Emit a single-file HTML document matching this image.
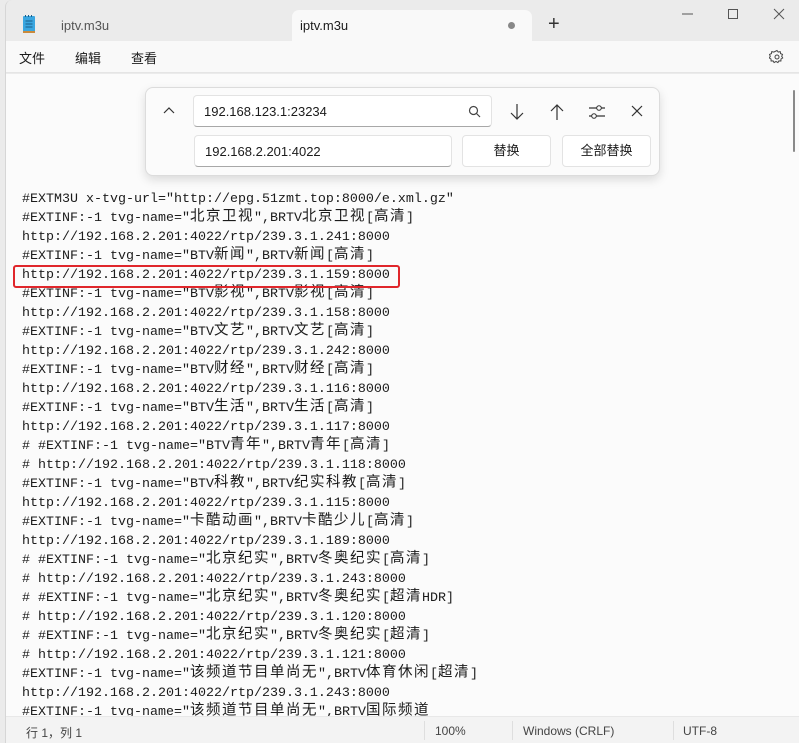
<!DOCTYPE html>
<html><head><meta charset="utf-8"><style>
*{margin:0;padding:0;box-sizing:border-box}
body{width:799px;height:743px;overflow:hidden;background:#ebebeb;font-family:"Liberation Sans","Noto Sans CJK SC",sans-serif;position:relative}
.abs{position:absolute}
#win{left:5px;top:0;width:794px;height:743px;background:#ebebeb;border-left:1px solid #d6d6d6;border-radius:7px 0 0 0}
#tab{left:292px;top:10px;width:240px;height:32px;background:#f9f9f9;border-radius:7px 7px 0 0}
#menu{left:6px;top:41px;width:793px;height:32px;background:#f9f9f9;border-bottom:1px solid #e5e5e5}
#edit{left:6px;top:74px;width:793px;height:642px;background:#fbfbfb;overflow:hidden}
#status{left:6px;top:716px;width:793px;height:27px;background:#f3f3f3;border-top:1px solid #e8e8e8;font-size:12px;color:#444}
.t{font-size:13px;color:#333}
pre{position:absolute;left:16px;top:116px;font-family:"Liberation Mono","Noto Sans CJK SC",monospace;font-size:13.33px;line-height:19px;color:#1b1b1b}
.c{font-family:"Noto Sans CJK SC",sans-serif;font-size:14.5px;letter-spacing:1.5px;line-height:10px;vertical-align:0.5px}
#panel{left:145px;top:87px;width:515px;height:89px;background:#fbfbfb;border:1px solid #dcdcdc;border-radius:8px;box-shadow:0 4px 10px rgba(0,0,0,.13)}
.inp{position:absolute;background:#fff;border:1px solid #e3e3e3;border-bottom:1px solid #a8a8a8;border-radius:4px;font-size:13px;color:#1b1b1b;padding:8px 10px;height:32px}
.btn{position:absolute;background:#fff;border:1px solid #e3e3e3;border-radius:4px;font-size:13px;color:#1b1b1b;text-align:center;line-height:30px;height:32px;width:89px}
.sep{position:absolute;top:4px;width:1px;height:19px;background:#dedede}
</style></head><body>
<div id="win" class="abs"></div>
<svg class="abs" style="left:22px;top:14px" width="14" height="20" viewBox="0 0 14 20"><rect x="1" y="2" width="12" height="16" rx="1" fill="#3aa6e0"/><rect x="1" y="17" width="12" height="2" fill="#c98a3c"/><g stroke="#1a5f8a" stroke-width="1"><line x1="3.5" y1="7" x2="10.5" y2="7"/><line x1="3.5" y1="10" x2="10.5" y2="10"/><line x1="3.5" y1="13" x2="10.5" y2="13"/></g><g fill="#1a5f8a"><rect x="3" y="1" width="1" height="2"/><rect x="6" y="1" width="1" height="2"/><rect x="9" y="1" width="1" height="2"/></g></svg>
<div class="abs t" style="left:61px;top:18px;color:#555">iptv.m3u</div>
<div id="tab" class="abs"></div>
<div class="abs t" style="left:300px;top:18px;color:#1b1b1b">iptv.m3u</div>
<div class="abs" style="left:508px;top:22px;width:7px;height:7px;border-radius:50%;background:#888"></div>
<div class="abs" style="left:548px;top:13px;font-size:20px;color:#333;font-weight:300">+</div>
<svg class="abs" style="left:676px;top:4px" width="120" height="22"><line x1="6" y1="10" x2="17" y2="10" stroke="#555"/><rect x="52.5" y="5.5" width="9" height="9" fill="none" stroke="#555"/><path d="M98 5l10 10M108 5l-10 10" stroke="#555"/></svg>
<div id="menu" class="abs"></div>
<div class="abs" style="left:19px;top:48px;font-size:13px;color:#1b1b1b">文件</div>
<div class="abs" style="left:75px;top:48px;font-size:13px;color:#1b1b1b">编辑</div>
<div class="abs" style="left:131px;top:48px;font-size:13px;color:#1b1b1b">查看</div>
<svg class="abs" style="left:769px;top:49px" width="16" height="16" viewBox="0 0 16 16"><path d="M8 1.5l1.2 1.6 2-.5.4 2 1.9.8-.8 1.9 1 1.7-1.7 1-.1 2-2-.1-1 1.7-1.9-1.1-1.9 1.1-1-1.7-2 .1-.1-2-1.7-1 1-1.7-.8-1.9 1.9-.8.4-2 2 .5z" fill="none" stroke="#444" stroke-width="1"/><circle cx="8" cy="8" r="2" fill="none" stroke="#444"/></svg>
<div id="edit" class="abs">
<pre>#EXTM3U x-tvg-url="http://epg.51zmt.top:8000/e.xml.gz"
#EXTINF:-1 tvg-name="<span class="c">北京卫视</span>",BRTV<span class="c">北京卫视</span>[<span class="c">高清</span>]
http://192.168.2.201:4022/rtp/239.3.1.241:8000
#EXTINF:-1 tvg-name="BTV<span class="c">新闻</span>",BRTV<span class="c">新闻</span>[<span class="c">高清</span>]
http://192.168.2.201:4022/rtp/239.3.1.159:8000
#EXTINF:-1 tvg-name="BTV<span class="c">影视</span>",BRTV<span class="c">影视</span>[<span class="c">高清</span>]
http://192.168.2.201:4022/rtp/239.3.1.158:8000
#EXTINF:-1 tvg-name="BTV<span class="c">文艺</span>",BRTV<span class="c">文艺</span>[<span class="c">高清</span>]
http://192.168.2.201:4022/rtp/239.3.1.242:8000
#EXTINF:-1 tvg-name="BTV<span class="c">财经</span>",BRTV<span class="c">财经</span>[<span class="c">高清</span>]
http://192.168.2.201:4022/rtp/239.3.1.116:8000
#EXTINF:-1 tvg-name="BTV<span class="c">生活</span>",BRTV<span class="c">生活</span>[<span class="c">高清</span>]
http://192.168.2.201:4022/rtp/239.3.1.117:8000
# #EXTINF:-1 tvg-name="BTV<span class="c">青年</span>",BRTV<span class="c">青年</span>[<span class="c">高清</span>]
# http://192.168.2.201:4022/rtp/239.3.1.118:8000
#EXTINF:-1 tvg-name="BTV<span class="c">科教</span>",BRTV<span class="c">纪实科教</span>[<span class="c">高清</span>]
http://192.168.2.201:4022/rtp/239.3.1.115:8000
#EXTINF:-1 tvg-name="<span class="c">卡酷动画</span>",BRTV<span class="c">卡酷少儿</span>[<span class="c">高清</span>]
http://192.168.2.201:4022/rtp/239.3.1.189:8000
# #EXTINF:-1 tvg-name="<span class="c">北京纪实</span>",BRTV<span class="c">冬奥纪实</span>[<span class="c">高清</span>]
# http://192.168.2.201:4022/rtp/239.3.1.243:8000
# #EXTINF:-1 tvg-name="<span class="c">北京纪实</span>",BRTV<span class="c">冬奥纪实</span>[<span class="c">超清</span>HDR]
# http://192.168.2.201:4022/rtp/239.3.1.120:8000
# #EXTINF:-1 tvg-name="<span class="c">北京纪实</span>",BRTV<span class="c">冬奥纪实</span>[<span class="c">超清</span>]
# http://192.168.2.201:4022/rtp/239.3.1.121:8000
#EXTINF:-1 tvg-name="<span class="c">该频道节目单尚无</span>",BRTV<span class="c">体育休闲</span>[<span class="c">超清</span>]
http://192.168.2.201:4022/rtp/239.3.1.243:8000
#EXTINF:-1 tvg-name="<span class="c">该频道节目单尚无</span>",BRTV<span class="c">国际频道</span></pre>
<div class="abs" style="left:7px;top:191px;width:387px;height:23px;border:2px solid #e0262b;border-radius:3px"></div>
<div class="abs" style="left:787px;top:16px;width:2px;height:62px;background:#8a8a8a;border-radius:1px"></div>
</div>
<div id="panel" class="abs">
<svg class="abs" style="left:16px;top:17px" width="14" height="10"><path d="M2 8l5-5 5 5" fill="none" stroke="#333" stroke-width="1.2"/></svg>
<div class="inp" style="left:47px;top:7px;width:299px">192.168.123.1:23234</div>
<svg class="abs" style="left:322px;top:17px" width="14" height="14"><circle cx="5.5" cy="5.5" r="4" fill="none" stroke="#444" stroke-width="1.2"/><line x1="8.5" y1="8.5" x2="12" y2="12" stroke="#444" stroke-width="1.2"/></svg>
<svg class="abs" style="left:360px;top:12px" width="140" height="24"><path d="M11 4v15M5 13l6 6 6-6" fill="none" stroke="#333" stroke-width="1.2"/><path d="M51 5v15M45 11l6-6 6 6" fill="none" stroke="#333" stroke-width="1.2"/><path d="M83 8h16M83 16h16" stroke="#333" stroke-width="1.2"/><circle cx="93" cy="8" r="2.3" fill="#fbfbfb" stroke="#333"/><circle cx="88" cy="16" r="2.3" fill="#fbfbfb" stroke="#333"/><path d="M126 6l10 10M136 6l-10 10" stroke="#333" stroke-width="1.2"/></svg>
<div class="inp" style="left:48px;top:47px;width:258px">192.168.2.201:4022</div>
<div class="btn" style="left:316px;top:47px">替换</div>
<div class="btn" style="left:416px;top:47px">全部替换</div>
</div>
<div id="status" class="abs">
<div class="abs" style="left:20px;top:7px">行 1，列 1</div>
<div class="sep" style="left:418px"></div>
<div class="abs" style="left:429px;top:7px">100%</div>
<div class="sep" style="left:506px"></div>
<div class="abs" style="left:517px;top:7px">Windows (CRLF)</div>
<div class="sep" style="left:667px"></div>
<div class="abs" style="left:677px;top:7px">UTF-8</div>
</div>
</body></html>
